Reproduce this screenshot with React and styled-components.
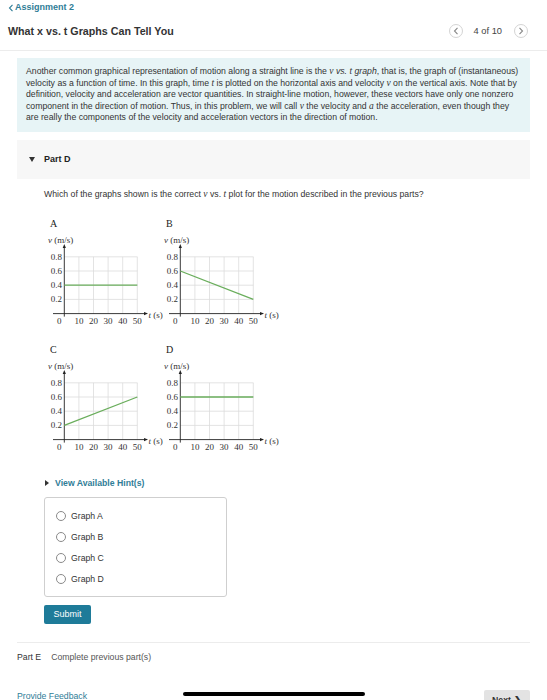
import React from "react";
import styled, { createGlobalStyle } from "styled-components";

const GlobalStyle = createGlobalStyle`
  html, body { margin: 0; padding: 0; background: #fff; }
  body { font-family: "Liberation Sans", Arial, Helvetica, sans-serif; color: #333; }
  * { box-sizing: border-box; }
`;

const Page = styled.div`
  position: relative;
  width: 547px;
  height: 700px;
  overflow: hidden;
  background: #fff;
`;

const TopBar = styled.div`
  padding: 2px 0 0 8px;
`;

const BackLink = styled.a`
  display: flex;
  align-items: center;
  gap: 1px;
  font-size: 9px;
  line-height: 11px;
  font-weight: bold;
  color: #2f7d97;
  text-decoration: none;
`;

const TitleRow = styled.div`
  margin-top: 6px;
  height: 24px;
  display: flex;
  align-items: center;
  justify-content: space-between;
  padding-right: 19px;
`;

const Title = styled.h1`
  margin: 0;
  font-size: 10.7px;
  font-weight: bold;
  color: #333;
`;

const Pager = styled.div`
  display: flex;
  align-items: center;
  font-size: 9.3px;
  color: #444;
`;

const NavCircle = styled.span`
  width: 14px;
  height: 14px;
  border-radius: 50%;
  border: 1px solid #d4d4d4;
  display: flex;
  align-items: center;
  justify-content: center;
  color: #888;
  margin: ${(p) => (p.$side === "left" ? "0 11px 0 0" : "0 0 0 12px")};
`;

const Divider = styled.div`
  margin-top: ${(p) => p.$top || 0}px;
  height: 1px;
  background: #ececec;
`;

const Content = styled.div`
  padding: 0 17px;
`;

const InfoBox = styled.div`
  margin-top: 7px;
  background: #e7f4f6;
  padding: 8px 8px 8px 9px;
  font-size: 8.7px;
  line-height: 11.5px;
  color: #333;
`;

const Var = styled.i`
  font-family: "Liberation Serif", "Times New Roman", serif;
  font-size: 9.5px;
`;

const PartHeader = styled.div`
  margin-top: 8px;
  height: 39px;
  background: #f7f7f7;
  display: flex;
  align-items: center;
  padding-left: 12px;
  gap: 9px;
  font-size: 9px;
  font-weight: bold;
  color: #222;
`;

const Caret = styled.span`
  width: 0;
  height: 0;
  border-left: 3.5px solid transparent;
  border-right: 3.5px solid transparent;
  border-top: 5px solid #333;
`;

const PartBody = styled.div`
  padding-left: 27px;
`;

const Question = styled.p`
  margin: 9px 0 0;
  font-size: 8.7px;
  line-height: 12px;
  color: #333;
`;

const GraphGrid = styled.div`
  margin-top: 12px;
  display: grid;
  grid-template-columns: 116px 120px;
  grid-auto-rows: 126px;
`;

const ChartSvg = styled.svg`
  display: block;
  overflow: visible;
  font-family: "Liberation Serif", "Times New Roman", serif;
`;

const HintToggle = styled.div`
  margin-top: 14px;
  display: flex;
  align-items: center;
  gap: 6px;
  font-size: 8.7px;
  line-height: 11px;
  font-weight: bold;
  color: #2f7d97;
`;

const HintCaret = styled.span`
  width: 0;
  height: 0;
  border-top: 3px solid transparent;
  border-bottom: 3px solid transparent;
  border-left: 4px solid #333;
  margin-left: 1px;
`;

const AnswerBox = styled.div`
  margin-top: 8px;
  width: 183px;
  height: 100px;
  border: 1px solid #cfcfcf;
  border-radius: 3px;
  padding: 8px 0 0 11px;
`;

const RadioRow = styled.label`
  height: 21px;
  display: flex;
  align-items: center;
  gap: 5px;
  font-size: 8.7px;
  color: #333;
`;

const RadioCircle = styled.span`
  width: 10px;
  height: 10px;
  border-radius: 50%;
  border: 1px solid #8a8a8a;
  background: #fff;
`;

const SubmitButton = styled.button`
  margin-top: 8px;
  width: 47px;
  height: 19px;
  border: none;
  border-radius: 2px;
  background: #1e7b99;
  color: #fff;
  font-family: inherit;
  font-size: 9px;
  padding: 0;
`;

const PartERow = styled.div`
  margin-top: 9px;
  display: flex;
  gap: 10px;
  font-size: 8.7px;
  line-height: 11px;
  color: #555;
`;

const PartELabel = styled.span`
  color: #333;
`;

const Footer = styled.div`
  margin-top: 27px;
  display: flex;
  justify-content: space-between;
  align-items: flex-start;
`;

const FeedbackLink = styled.a`
  margin-top: 1px;
  font-size: 8.7px;
  line-height: 11px;
  color: #2f7d97;
  text-decoration: underline;
`;

const NextButton = styled.span`
  width: 46px;
  height: 20px;
  background: #e3e3e3;
  border-radius: 2px;
  font-size: 8.7px;
  font-weight: bold;
  color: #333;
  display: flex;
  justify-content: center;
  padding-top: 5px;
  gap: 3px;
`;

const HomeBar = styled.div`
  position: absolute;
  left: 183px;
  top: 692px;
  width: 182px;
  height: 4px;
  border-radius: 2px;
  background: #000;
`;

const Chevron = ({ dir }) => (
  <svg width="6" height="8" viewBox="0 0 6 8">
    <path
      d={dir === "left" ? "M4.5 0.8 L1.5 4 L4.5 7.2" : "M1.5 0.8 L4.5 4 L1.5 7.2"}
      fill="none"
      stroke="currentColor"
      strokeWidth="1.1"
    />
  </svg>
);

const X0 = 20.3;
const DX = 14.6;
const Y0 = 101.6;
const DY = 14.2;
const tx = (t) => X0 + (t / 10) * DX;
const vy = (v) => Y0 - (v / 0.2) * DY;
const FS = 9;

const Chart = ({ label, from, to }) => {
  const ts = [10, 20, 30, 40, 50];
  const vs = [0.2, 0.4, 0.6, 0.8];
  return (
    <ChartSvg width="120" height="126" viewBox="0 0 120 126">
      <text x="6" y="14.5" fontSize="10" fill="#222">{label}</text>
      <text x="4" y="30.5" fontSize={FS} fill="#333">
        <tspan fontStyle="italic">v</tspan> (m/s)
      </text>
      {ts.map((t) => (
        <line key={"v" + t} x1={tx(t)} x2={tx(t)} y1={vy(0.8)} y2={Y0} stroke="#dcdcdc" strokeWidth="0.8" />
      ))}
      {vs.map((v) => (
        <line key={"h" + v} x1={X0} x2={tx(50)} y1={vy(v)} y2={vy(v)} stroke="#dcdcdc" strokeWidth="0.8" />
      ))}
      <line x1={X0} x2={X0} y1={Y0 + 3} y2={35} stroke="#222" strokeWidth="0.9" />
      <path d={`M${X0 - 1.6} 36 L${X0} 32 L${X0 + 1.6} 36 Z`} fill="#222" />
      <line x1="9" x2="100" y1={Y0} y2={Y0} stroke="#222" strokeWidth="0.9" />
      <path d={`M100 ${Y0 - 1.6} L104 ${Y0} L100 ${Y0 + 1.6} Z`} fill="#222" />
      {vs.map((v) => (
        <text key={"yl" + v} x="18" y={vy(v) + 3} fontSize={FS} textAnchor="end" fill="#333">
          {v.toFixed(1)}
        </text>
      ))}
      <text x="15.3" y={Y0 + 10} fontSize={FS} textAnchor="middle" fill="#333">0</text>
      {ts.map((t) => (
        <text key={"xl" + t} x={tx(t)} y={Y0 + 10} fontSize={FS} textAnchor="middle" fill="#333">
          {t}
        </text>
      ))}
      <text x="104.5" y={Y0 + 4.2} fontSize={FS} fill="#333">
        <tspan fontStyle="italic">t</tspan> (s)
      </text>
      <line x1={X0} x2={tx(50)} y1={vy(from)} y2={vy(to)} stroke="#6aae5c" strokeWidth="1.3" />
    </ChartSvg>
  );
};

const graphs = [
  { label: "A", from: 0.4, to: 0.4 },
  { label: "B", from: 0.6, to: 0.2 },
  { label: "C", from: 0.2, to: 0.6 },
  { label: "D", from: 0.6, to: 0.6 },
];

export default function App() {
  return (
    <Page>
      <GlobalStyle />
      <TopBar>
        <BackLink href="#">
          <Chevron dir="left" />
          Assignment 2
        </BackLink>
        <TitleRow>
          <Title>What x vs. t Graphs Can Tell You</Title>
          <Pager>
            <NavCircle $side="left"><Chevron dir="left" /></NavCircle>
            4 of 10
            <NavCircle $side="right"><Chevron dir="right" /></NavCircle>
          </Pager>
        </TitleRow>
      </TopBar>
      <Divider $top={7} />
      <Content>
        <InfoBox>
          Another common graphical representation of motion along a straight line is the <Var>v</Var>{" "}
          <em>vs.</em> <Var>t</Var> <em>graph</em>, that is, the graph of (instantaneous) velocity as a
          function of time. In this graph, time <Var>t</Var> is plotted on the horizontal axis and velocity{" "}
          <Var>v</Var> on the vertical axis. Note that by definition, velocity and acceleration are vector
          quantities. In straight-line motion, however, these vectors have only one nonzero component in the
          direction of motion. Thus, in this problem, we will call <Var>v</Var> the velocity and <Var>a</Var>{" "}
          the acceleration, even though they are really the components of the velocity and acceleration
          vectors in the direction of motion.
        </InfoBox>
        <PartHeader>
          <Caret />
          Part D
        </PartHeader>
        <PartBody>
          <Question>
            Which of the graphs shown is the correct <Var>v</Var> vs. <Var>t</Var> plot for the motion
            described in the previous parts?
          </Question>
          <GraphGrid>
            {graphs.map((g) => (
              <Chart key={g.label} {...g} />
            ))}
          </GraphGrid>
          <HintToggle>
            <HintCaret />
            View Available Hint(s)
          </HintToggle>
          <AnswerBox>
            {["Graph A", "Graph B", "Graph C", "Graph D"].map((o) => (
              <RadioRow key={o}>
                <RadioCircle />
                {o}
              </RadioRow>
            ))}
          </AnswerBox>
          <SubmitButton>Submit</SubmitButton>
        </PartBody>
        <Divider $top={18} />
        <PartERow>
          <PartELabel>Part E</PartELabel>
          Complete previous part(s)
        </PartERow>
        <Footer>
          <FeedbackLink href="#">Provide Feedback</FeedbackLink>
          <NextButton>
            Next <span>❯</span>
          </NextButton>
        </Footer>
      </Content>
      <HomeBar />
    </Page>
  );
}
